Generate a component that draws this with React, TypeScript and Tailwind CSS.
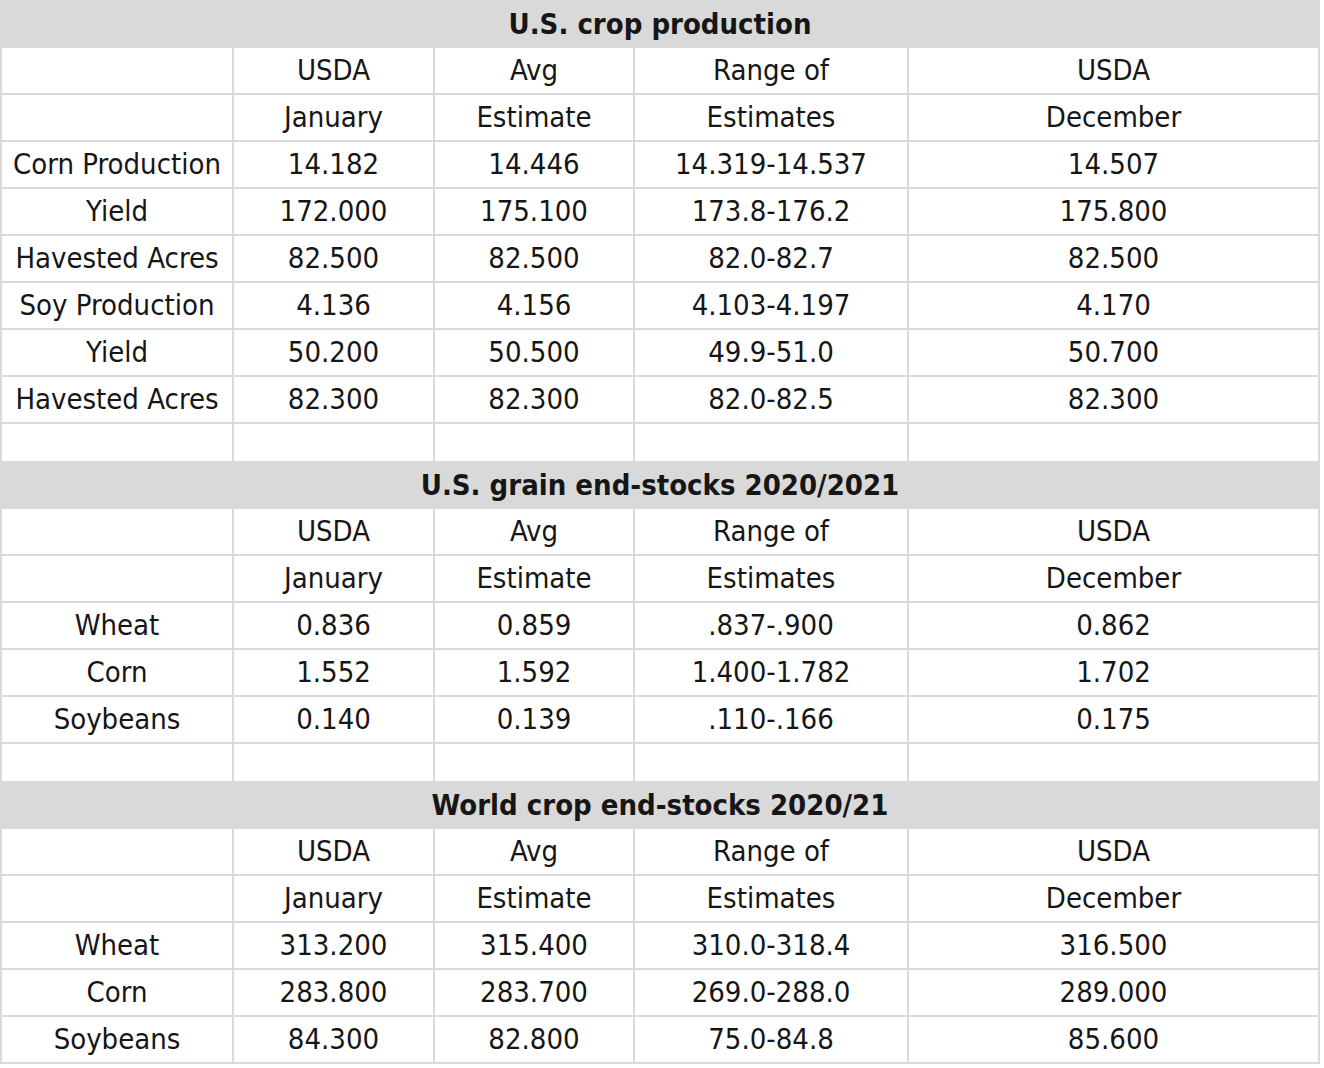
const headerA = ['USDA', 'Avg', 'Range of', 'USDA'];
const headerB = ['January', 'Estimate', 'Estimates', 'December'];

type Row = [string, string, string, string, string];

const sections: { title: string; rows: Row[] }[] = [
  {
    title: 'U.S. crop production',
    rows: [
      ['Corn Production', '14.182', '14.446', '14.319-14.537', '14.507'],
      ['Yield', '172.000', '175.100', '173.8-176.2', '175.800'],
      ['Havested Acres', '82.500', '82.500', '82.0-82.7', '82.500'],
      ['Soy Production', '4.136', '4.156', '4.103-4.197', '4.170'],
      ['Yield', '50.200', '50.500', '49.9-51.0', '50.700'],
      ['Havested Acres', '82.300', '82.300', '82.0-82.5', '82.300'],
    ],
  },
  {
    title: 'U.S. grain end-stocks 2020/2021',
    rows: [
      ['Wheat', '0.836', '0.859', '.837-.900', '0.862'],
      ['Corn', '1.552', '1.592', '1.400-1.782', '1.702'],
      ['Soybeans', '0.140', '0.139', '.110-.166', '0.175'],
    ],
  },
  {
    title: 'World crop end-stocks 2020/21',
    rows: [
      ['Wheat', '313.200', '315.400', '310.0-318.4', '316.500'],
      ['Corn', '283.800', '283.700', '269.0-288.0', '289.000'],
      ['Soybeans', '84.300', '82.800', '75.0-84.8', '85.600'],
    ],
  },
];

const cell = 'border-2 border-[#dadada] text-center p-0 whitespace-nowrap';

export default function App() {
  return (
    <div className="bg-white w-[1324px] h-[1068px] text-[#161616] [font-family:'DejaVu_Sans',Verdana,sans-serif] [font-stretch:condensed] text-[29px] leading-none">
      <table className="table-fixed border-collapse w-[1318px]">
        <colgroup>
          <col className="w-[232px]" />
          <col className="w-[201px]" />
          <col className="w-[200px]" />
          <col className="w-[274px]" />
          <col className="w-[411px]" />
        </colgroup>
        <tbody>
          {sections.map((section, si) => (
            <>
              <tr key={`t${si}`} className="h-[46px] bg-[#d9d9d9]">
                <td colSpan={5} className={`${cell} font-bold`}>
                  {section.title}
                </td>
              </tr>
              <tr key={`a${si}`} className="h-[47px]">
                <td className={cell}></td>
                {headerA.map((h, i) => (
                  <td key={i} className={cell}>{h}</td>
                ))}
              </tr>
              <tr key={`b${si}`} className="h-[47px]">
                <td className={cell}></td>
                {headerB.map((h, i) => (
                  <td key={i} className={cell}>{h}</td>
                ))}
              </tr>
              {section.rows.map((row, ri) => (
                <tr key={`r${si}-${ri}`} className="h-[47px]">
                  {row.map((v, ci) => (
                    <td key={ci} className={cell}>{v}</td>
                  ))}
                </tr>
              ))}
              {si < sections.length - 1 && (
                <tr key={`e${si}`} className="h-[39px]">
                  <td className={cell}></td>
                  <td className={cell}></td>
                  <td className={cell}></td>
                  <td className={cell}></td>
                  <td className={cell}></td>
                </tr>
              )}
            </>
          ))}
        </tbody>
      </table>
    </div>
  );
}
